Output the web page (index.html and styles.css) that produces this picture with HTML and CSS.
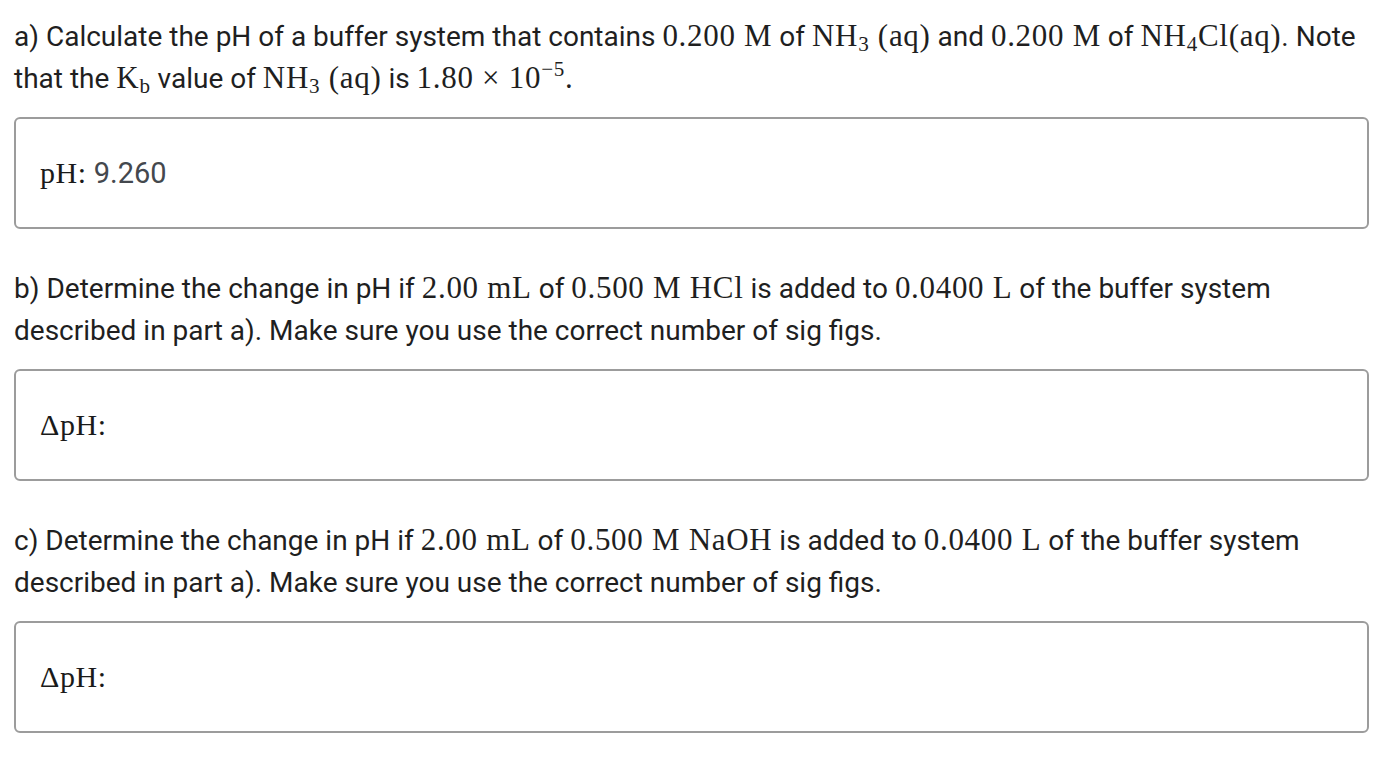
FILE: index.html
```html
<!DOCTYPE html>
<html lang="en">
<head>
<meta charset="utf-8">
<title>Buffer questions</title>
<link rel="stylesheet" href="styles.css">
</head>
<body>
<main class="page">
  <section class="question">
    <p class="prompt">a) Calculate the pH of a buffer system that contains <span class="m">0.200 M</span> of <span class="m">NH<span class="sub">3</span> (aq)</span> and <span class="m">0.200 M</span> of <span class="m">NH<span class="sub">4</span>Cl(aq)</span>. Note<br>that the <span class="m">K<span class="sub">b</span></span> value of <span class="m">NH<span class="sub">3</span> (aq)</span> is <span class="m">1.80 × 10<span class="sup">−5</span>.</span></p>
    <div class="answer"><span class="m label">pH:</span> <span class="value">9.260</span></div>
  </section>
  <section class="question">
    <p class="prompt">b) Determine the change in pH if <span class="m">2.00 mL</span> of <span class="m">0.500 M HCl</span> is added to <span class="m">0.0400 L</span> of the buffer system<br>described in part a). Make sure you use the correct number of sig figs.</p>
    <div class="answer"><span class="m label">ΔpH:</span></div>
  </section>
  <section class="question">
    <p class="prompt">c) Determine the change in pH if <span class="m">2.00 mL</span> of <span class="m">0.500 M NaOH</span> is added to <span class="m">0.0400 L</span> of the buffer system<br>described in part a). Make sure you use the correct number of sig figs.</p>
    <div class="answer"><span class="m label">ΔpH:</span></div>
  </section>
</main>
</body>
</html>
```
FILE: styles.css
```css
html, body {
  margin: 0;
  padding: 0;
  background: #ffffff;
}

.page {
  padding: 16px 21px 0 14px;
  display: flex;
  flex-direction: column;
  gap: 39px;
  font-family: Roboto, "Liberation Sans", sans-serif;
  font-size: 28px;
  color: #1f1f1f;
}

.question {
  display: flex;
  flex-direction: column;
  gap: 17px;
}

.prompt {
  margin: 0;
  line-height: 42px;
  white-space: nowrap;
}

.m {
  font-family: "Liberation Serif", "DejaVu Serif", serif;
  font-size: 31px;
  letter-spacing: 0.7px;
  line-height: 0;
}

.sub {
  font-size: 0.68em;
  position: relative;
  top: 0.22em;
}

.sup {
  font-size: 0.68em;
  position: relative;
  top: -0.58em;
}

.answer {
  height: 112px;
  box-sizing: border-box;
  border: 2px solid #9c9c9c;
  border-radius: 6px;
  padding: 0 24px;
  display: flex;
  align-items: center;
  gap: 7px;
}

.label {
  color: #1a1a1a;
  font-size: 30px;
  letter-spacing: 0.6px;
}

.value {
  color: #44484e;
  font-size: 29px;
  letter-spacing: 0;
}
```
